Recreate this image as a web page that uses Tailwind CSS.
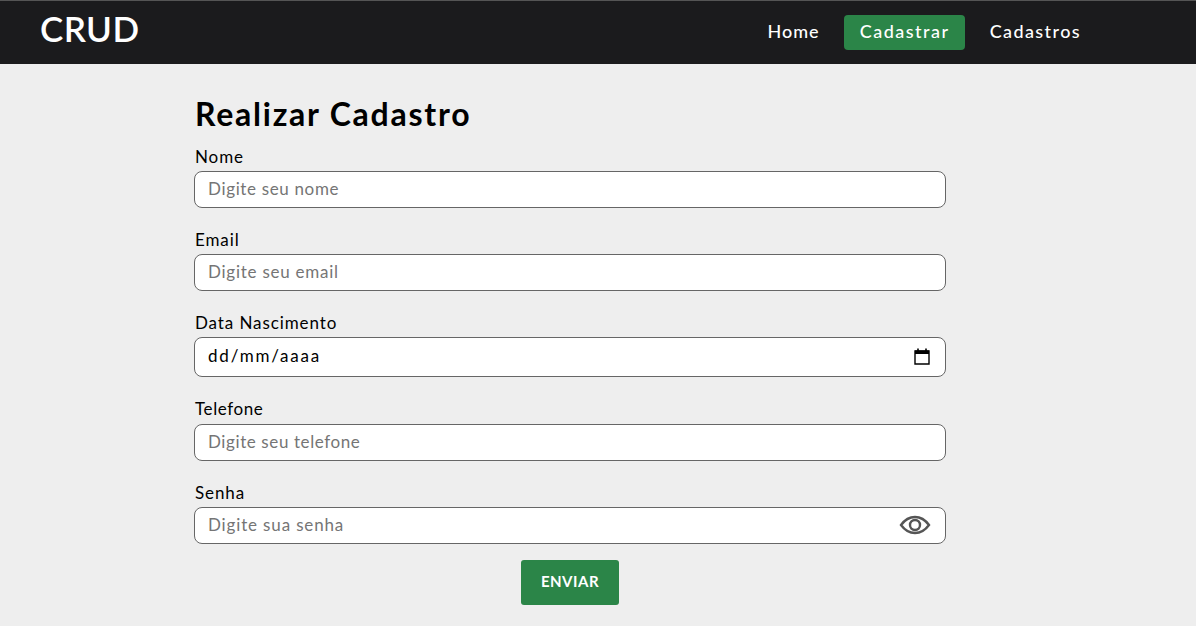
<!DOCTYPE html>
<html lang="pt-BR">
<head>
    <meta charset="UTF-8">
    <meta name="viewport" content="width=device-width, initial-scale=1.0">
    <title>CRUD - Cadastrar</title>
    <script src="https://cdn.jsdelivr.net/npm/@tailwindcss/browser@4"></script>
</head>
<body class="bg-[#eeeeee] font-['Lato',sans-serif] text-black h-[626px] overflow-hidden">
    <!-- Navbar -->
    <nav class="h-16 bg-[#1b1b1d] border-t border-[#555555] flex items-center justify-between pl-10 pr-[100px]">
        <a href="#" class="text-[35px] leading-none font-semibold text-white tracking-[0.4px] -mt-[8px]">CRUD</a>
        <div class="flex items-center gap-[10px] text-[18px] font-medium text-white tracking-[1.4px]">
            <a href="#" class="px-[15px] h-[35px] pb-[2px] flex items-center tracking-[1px]">Home</a>
            <a href="#" class="-ml-px pl-[16px] pr-[15px] h-[35px] pb-[2px] flex items-center bg-[#2b8548] rounded-[4px] tracking-[1.5px]">Cadastrar</a>
            <a href="#" class="px-[15px] h-[35px] pb-[2px] flex items-center">Cadastros</a>
        </div>
    </nav>

    <!-- Form -->
    <main class="ml-[194px] w-[752px]">
        <h1 class="pt-[31px] h-[87px] text-[32px] leading-[38px] font-bold tracking-[1.75px] pl-px">Realizar Cadastro</h1>
        <form class="flex flex-col">
            <label class="h-5 leading-[12px] text-[17px] tracking-[0.9px] pl-px">Nome</label>
            <input type="text" placeholder="Digite seu nome" class="h-[37px] mb-[26px] px-[13px] pb-[2px] bg-white border border-[#666666] rounded-lg text-[17px] tracking-[0.65px] placeholder:text-[#757575]">

            <label class="h-5 leading-[11px] text-[17px] tracking-[0.9px] pl-px">Email</label>
            <input type="text" placeholder="Digite seu email" class="h-[37px] mb-[26px] px-[13px] pb-[2px] bg-white border border-[#666666] rounded-lg text-[17px] tracking-[0.75px] placeholder:text-[#757575]">

            <label class="h-5 leading-[11px] text-[17px] tracking-[0.9px] pl-px">Data Nascimento</label>
            <div class="relative mb-[26px]">
                <input type="text" value="dd/mm/aaaa" class="w-full h-10 px-[13px] pb-[3px] bg-white border border-[#666666] rounded-lg text-[17px] tracking-[1.8px] text-black">
                <svg class="absolute right-[16px] top-[11px] w-[16px] h-[17px]" viewBox="0 0 16 17" fill="none">
                    <path d="M1 3h14v13H1z" stroke="#000" stroke-width="1.4"/>
                    <path d="M1 2.500h14V6H1z" fill="#000"/>
                    <path d="M4 0.500v2.500M12 0.500v2.500" stroke="#000" stroke-width="1.6"/>
                </svg>
            </div>

            <label class="h-[21px] leading-[11px] text-[17px] tracking-[0.6px] pl-px">Telefone</label>
            <input type="text" placeholder="Digite seu telefone" class="h-[37px] mb-[26px] px-[13px] pb-[2px] bg-white border border-[#666666] rounded-lg text-[17px] tracking-[0.6px] placeholder:text-[#757575]">

            <label class="h-5 leading-[11px] text-[17px] tracking-[0.9px] pl-px">Senha</label>
            <div class="relative mb-4">
                <input type="password" placeholder="Digite sua senha" class="w-full h-[37px] px-[13px] pb-[2px] bg-white border border-[#666666] rounded-lg text-[17px] tracking-[0.85px] placeholder:text-[#757575]">
                <svg class="absolute right-[15px] top-[6px] w-[32px] h-[24px]" viewBox="0 0 32 24" fill="none" stroke="#555555">
                    <path d="M2 12C6 6.500 10.500 4 16 4s10 2.500 14 8c-4 5.500-8.500 8-14 8S6 17.500 2 12z" stroke-width="2.400"/>
                    <circle cx="16" cy="12" r="5" stroke-width="2.400"/>
                </svg>
            </div>

            <button type="button" class="self-center w-[98px] h-[45px] pb-[2px] bg-[#2b8548] rounded-[3px] text-white text-[15px] font-bold tracking-[0.5px]">ENVIAR</button>
        </form>
    </main>
</body>
</html>
